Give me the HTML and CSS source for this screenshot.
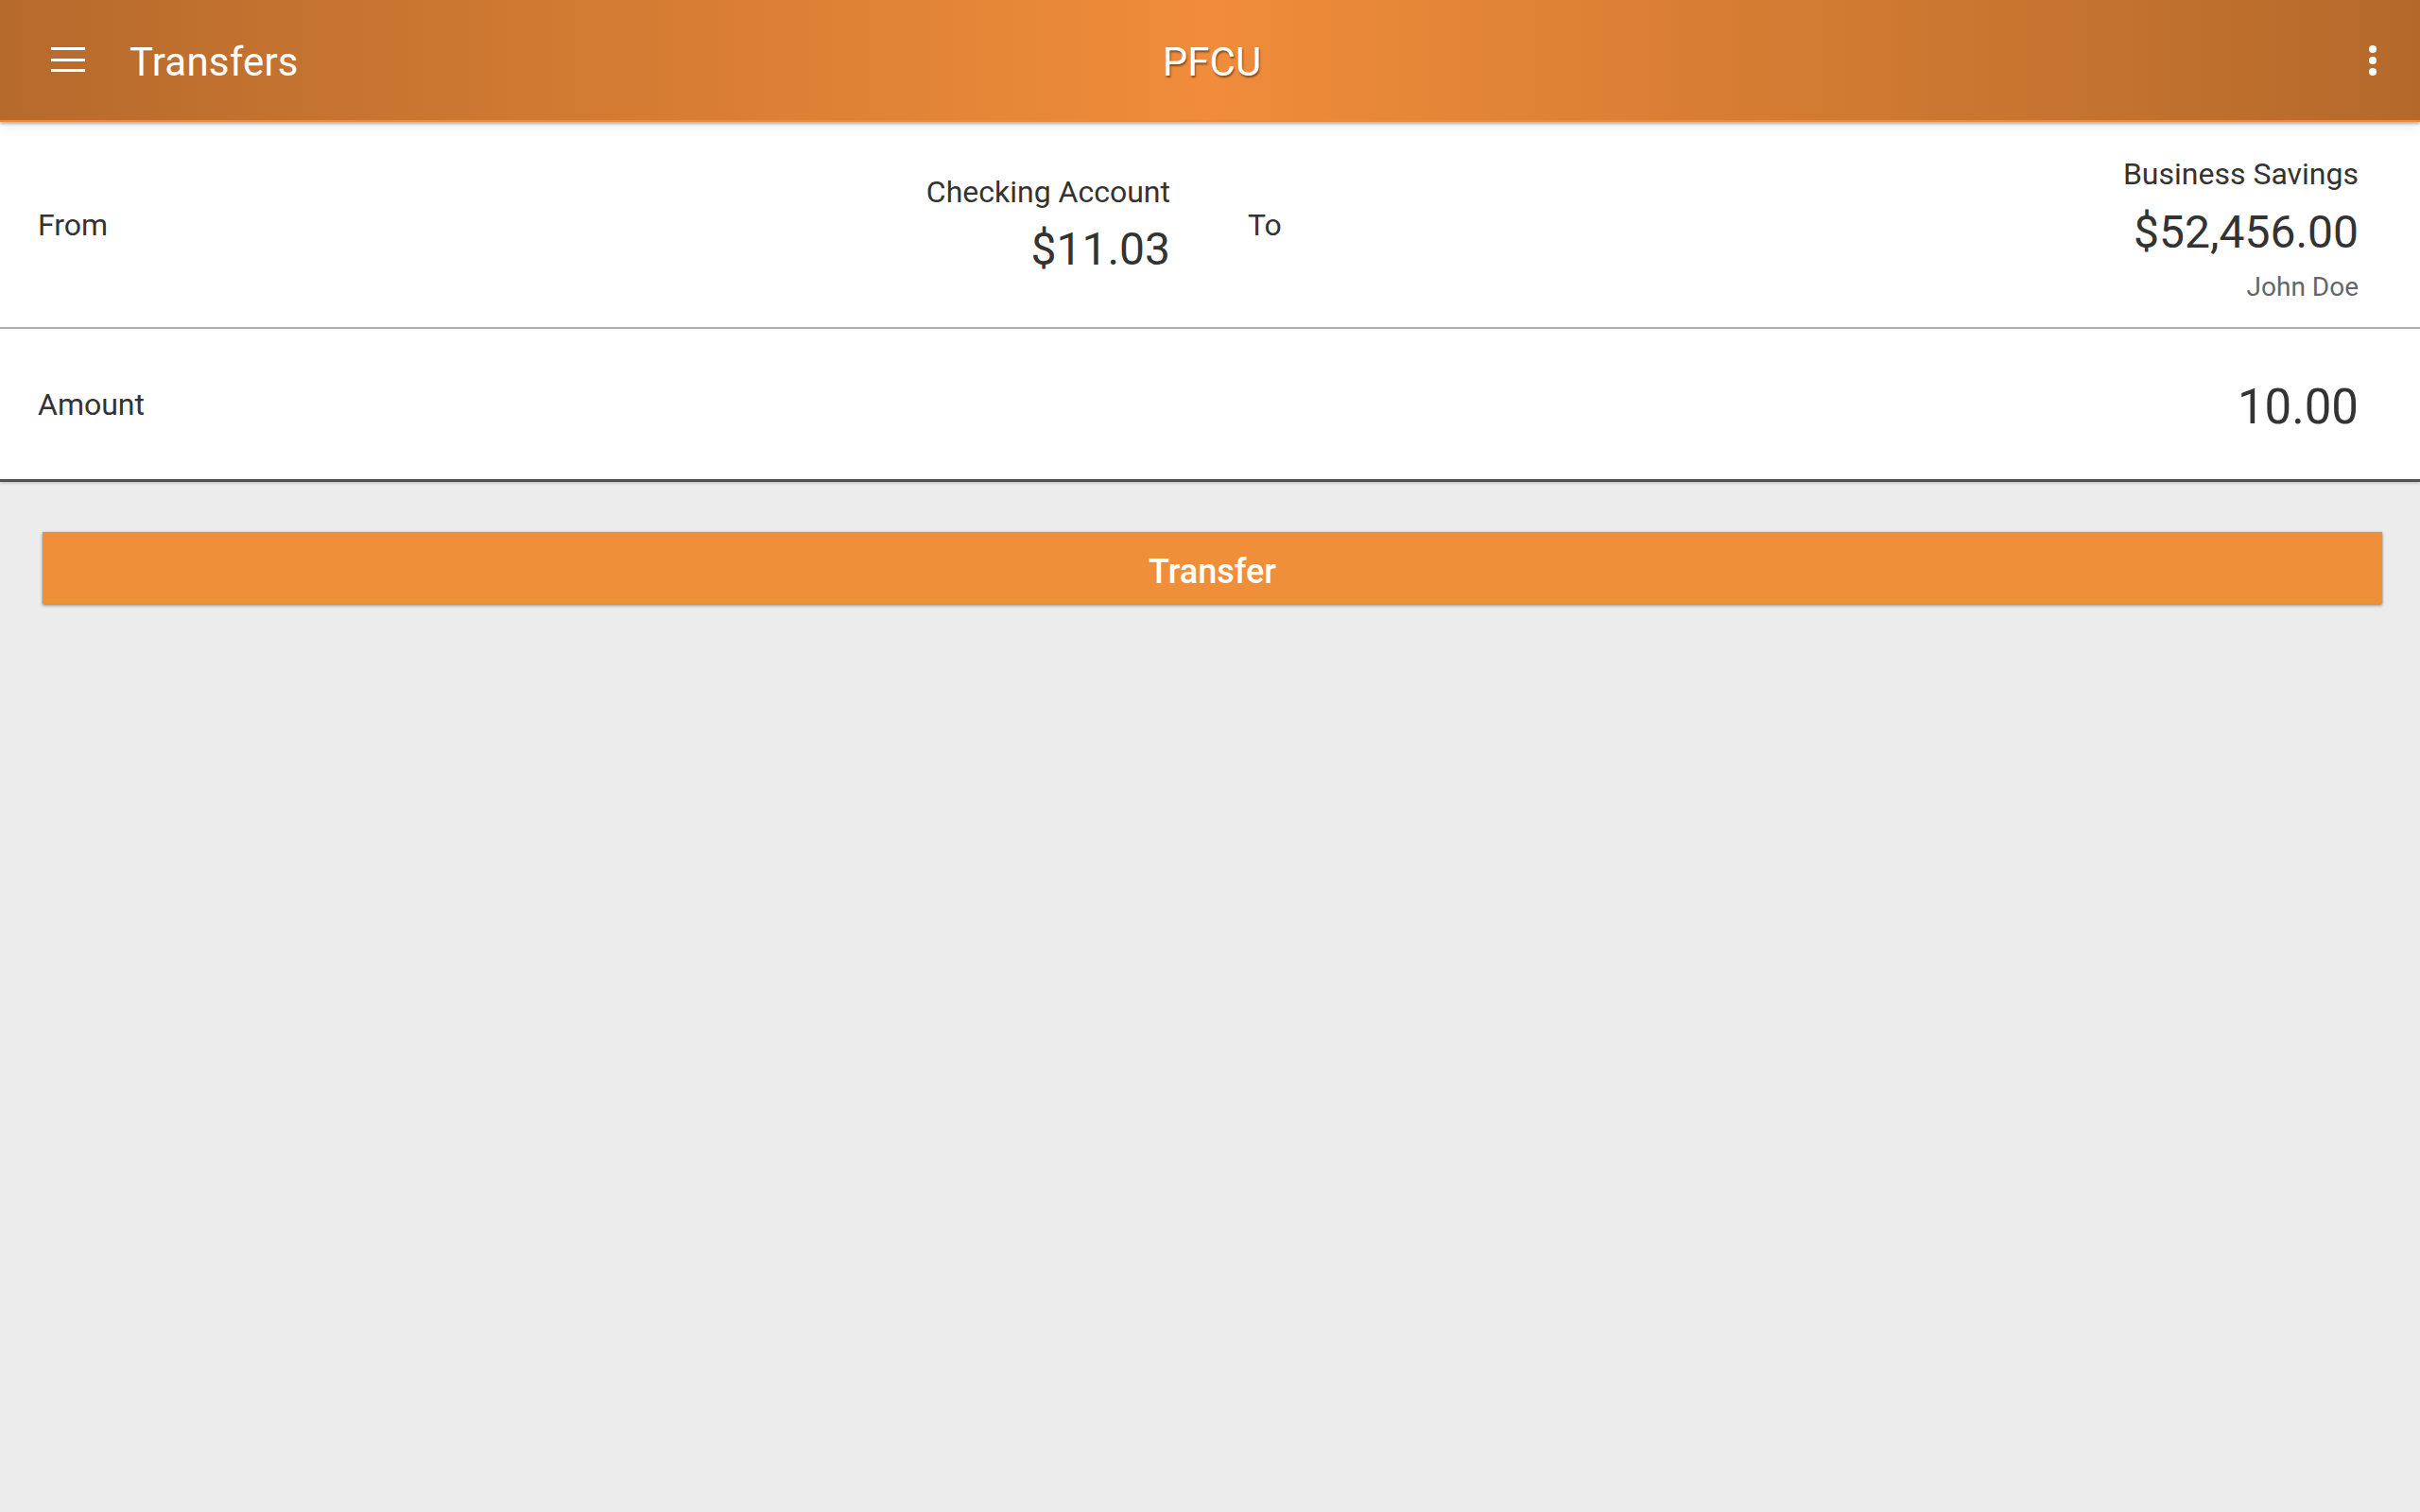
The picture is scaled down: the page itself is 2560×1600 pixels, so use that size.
FILE: index.html
```html
<!DOCTYPE html>
<html lang="en">
<head>
<meta charset="utf-8">
<title>Transfers - PFCU</title>
<link rel="stylesheet" href="styles.css">
</head>
<body>
<header class="appbar">
  <div class="appbar-left">
    <button class="menu-btn" aria-label="Menu">
      <span class="menu-line"></span>
      <span class="menu-line"></span>
      <span class="menu-line"></span>
    </button>
    <h1 class="page-title">Transfers</h1>
  </div>
  <div class="brand">PFCU</div>
  <div class="appbar-right">
    <button class="more-btn" aria-label="More options">
      <span class="dot"></span>
      <span class="dot"></span>
      <span class="dot"></span>
    </button>
  </div>
</header>

<main>
  <section class="card">
    <div class="row-accounts">
      <div class="half half-from">
        <span class="label">From</span>
        <div class="account">
          <div class="account-name">Checking Account</div>
          <div class="account-balance">$11.03</div>
        </div>
      </div>
      <div class="half half-to">
        <span class="label">To</span>
        <div class="account account-to">
          <div class="account-name">Business Savings</div>
          <div class="account-balance account-balance-to">$52,456.00</div>
          <div class="account-owner">John Doe</div>
        </div>
      </div>
    </div>
    <div class="row-amount">
      <span class="label">Amount</span>
      <span class="amount-value">10.00</span>
    </div>
  </section>

  <button class="transfer-btn">Transfer</button>
</main>
</body>
</html>
```

FILE: styles.css
```css
* {
  box-sizing: border-box;
}

html, body {
  margin: 0;
  padding: 0;
}

body {
  background: #ececec;
  font-family: Roboto, "Noto Sans", "Liberation Sans", sans-serif;
  color: #333333;
  min-height: 1600px;
}

button {
  font-family: inherit;
  border: 0;
  background: none;
  padding: 0;
  margin: 0;
  cursor: pointer;
}

/* ---------- App bar ---------- */
.appbar {
  position: relative;
  z-index: 2;
  height: 129px;
  display: grid;
  grid-template-columns: 1fr auto 1fr;
  align-items: center;
  background: linear-gradient(to right, #b66a2c 0%, #f08c3a 50%, #b4692b 100%);
  border-bottom: 2px solid #ec8a3c;
  box-shadow: 0 2px 3px rgba(0, 0, 0, 0.28), 0 6px 12px rgba(0, 0, 0, 0.06);
  color: #ffffff;
}

.appbar-left {
  display: flex;
  align-items: center;
  padding-left: 54px;
}

.menu-btn {
  width: 36px;
  height: 26px;
  display: flex;
  flex-direction: column;
  justify-content: space-between;
  margin-top: -1px;
}

.menu-line {
  display: block;
  width: 36px;
  height: 3px;
  background: #ffffff;
}

.page-title {
  margin: 0 0 0 47px;
  padding-top: 4px;
  font-size: 42px;
  font-weight: 400;
  line-height: 50px;
  letter-spacing: 0.2px;
}

.brand {
  padding: 4px 0 0 4px;
  font-size: 42px;
  font-weight: 400;
  line-height: 50px;
  text-shadow: 1px 2px 2px rgba(0, 0, 0, 0.45);
}

.appbar-right {
  display: flex;
  justify-content: flex-end;
  padding-right: 46px;
}

.more-btn {
  width: 8px;
  height: 32px;
  display: flex;
  flex-direction: column;
  justify-content: space-between;
}

.dot {
  display: block;
  width: 8px;
  height: 8px;
  border-radius: 50%;
  background: #ffffff;
}

/* ---------- Card ---------- */
.card {
  background: #ffffff;
  box-shadow: 0 3px 0 #505050, 0 4px 3px rgba(0, 0, 0, 0.22);
}

.row-accounts {
  height: 219px;
  display: grid;
  grid-template-columns: 1fr 1fr;
  border-bottom: 2px solid #b0b0b0;
}

.half {
  display: flex;
  align-items: center;
  justify-content: space-between;
}

.half-from {
  padding: 0 42px 0 40px;
}

.half-to {
  padding: 0 65px 0 40px;
}

.label {
  font-size: 32px;
  line-height: 40px;
  color: #333333;
}

.account {
  text-align: right;
}

.account-to {
  padding-top: 10px;
}

.account-name {
  font-size: 32px;
  line-height: 38px;
  color: #333333;
}

.account-balance {
  font-size: 48px;
  line-height: 56px;
  margin-top: 14px;
  color: #333333;
}

.account-balance-to {
  margin-top: 15px;
}

.account-owner {
  font-size: 28px;
  line-height: 34px;
  margin-top: 13px;
  color: #666666;
}

.row-amount {
  height: 159px;
  display: flex;
  align-items: center;
  justify-content: space-between;
  padding: 0 65px 0 40px;
}

.amount-value {
  font-size: 51px;
  line-height: 60px;
  margin-top: 6px;
  color: #333333;
}

/* ---------- Button ---------- */
.transfer-btn {
  display: block;
  width: calc(100% - 85px);
  margin: 56px 40px 0 45px;
  height: 76px;
  padding-top: 8px;
  background: #f08f3a;
  color: #ffffff;
  font-size: 36px;
  font-weight: 500;
  box-shadow: 0 2px 3px rgba(0, 0, 0, 0.35), 0 0 2px rgba(0, 0, 0, 0.2);
}
```
